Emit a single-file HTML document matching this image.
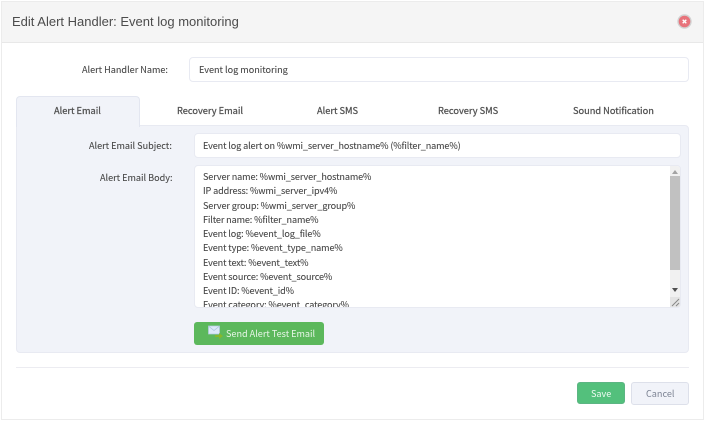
<!DOCTYPE html>
<html><head><meta charset="utf-8">
<style>
html,body{margin:0;padding:0;width:705px;height:422px;overflow:hidden;background:#fff}
body{font-family:"Noto Sans CJK JP","Liberation Sans",sans-serif;color:#454545;font-size:9.1px;-webkit-text-stroke:.08px #454545}
#p{position:relative;width:705px;height:422px;background:#fff;overflow:hidden;filter:blur(.25px)}
.a{position:absolute;box-sizing:border-box}
.t{position:absolute;white-space:nowrap;line-height:14px}
.b{color:#505050;font-size:9.25px;-webkit-text-stroke:.25px #505050}
.n{letter-spacing:-.12px}
.i{position:absolute;box-sizing:border-box;background:#fff;border:1px solid #e8eaf2;border-radius:4px}
</style></head><body><div id="p">
<div class="a" style="left:1px;top:1px;width:703px;height:419px;border:1px solid #ececec;background:#fff"></div>
<div class="a" style="left:2px;top:2px;width:701px;height:41px;background:#f5f5f5;border-bottom:1px solid #e8e8e8"></div>
<div class="t" style="left:12px;top:13px;font-family:'Liberation Sans',sans-serif;font-size:13px;line-height:18px;color:#4c4c4c;-webkit-text-stroke:0">Edit Alert Handler: Event log monitoring</div>
<svg class="a" style="left:677px;top:14px" width="15" height="15" viewBox="0 0 15 15"><circle cx="7.5" cy="7.5" r="6.5" fill="#e8737b" stroke="#d2d2d2" stroke-width="1.4"/><path d="M5.7 5.7l3.6 3.6M9.3 5.7l-3.6 3.6" stroke="#fff" stroke-width="1.4"/></svg>

<div class="t" style="left:82px;top:62px">Alert Handler Name:</div>
<div class="i" style="left:189px;top:57px;width:500px;height:25px"></div>
<div class="t" style="left:199px;top:62px">Event log monitoring</div>

<div class="a" style="left:16px;top:125px;width:673px;height:228px;background:#f1f3f9;border:1px solid #e8eaf2;border-radius:0 4px 4px 4px"></div>
<div class="a" style="left:16px;top:96px;width:124px;height:31px;background:#f1f3f9;border:1px solid #e3e6f0;border-bottom:0;border-radius:4px 4px 0 0"></div>
<div class="t b" style="left:54px;top:103px">Alert Email</div>
<div class="t b" style="left:177px;top:103px">Recovery Email</div>
<div class="t b" style="left:317px;top:103px">Alert SMS</div>
<div class="t b" style="left:438px;top:103px">Recovery SMS</div>
<div class="t b" style="left:573px;top:103px">Sound Notification</div>

<div class="t" style="left:89px;top:138px">Alert Email Subject:</div>
<div class="i" style="left:194px;top:133px;width:487px;height:25px"></div>
<div class="t n" style="left:203px;top:138px">Event log alert on %wmi_server_hostname% (%filter_name%)</div>

<div class="t" style="left:100px;top:170px">Alert Email Body:</div>
<div class="i" style="left:194px;top:165px;width:487px;height:143px;overflow:hidden">
<div class="n" style="position:absolute;left:8px;top:3px;line-height:14.25px;white-space:pre">Server name: %wmi_server_hostname%
IP address: %wmi_server_ipv4%
Server group: %wmi_server_group%
Filter name: %filter_name%
Event log: %event_log_file%
Event type: %event_type_name%
Event text: %event_text%
Event source: %event_source%
Event ID: %event_id%
Event category: %event_category%</div>
<div style="position:absolute;right:0;top:0;width:10px;height:141px;background:#f1f1f1"></div>
<div style="position:absolute;right:0;top:10px;width:10px;height:94px;background:#c1c1c1"></div>
<div style="position:absolute;right:2px;top:4px;width:0;height:0;border:3px solid transparent;border-top:0;border-bottom:4px solid #a3a3a3"></div>
<div style="position:absolute;right:2px;top:122px;width:0;height:0;border:3px solid transparent;border-bottom:0;border-top:4px solid #505050"></div>
<div style="position:absolute;right:0;bottom:0;width:10px;height:10px;background:#e4e4e4"></div>
<svg style="position:absolute;right:0;bottom:0" width="10" height="10"><path d="M2 9L9 2M6 9L9 6" stroke="#888" stroke-width="1"/></svg>
</div>

<div class="a" style="left:194px;top:322px;width:130px;height:23px;background:#5cb85c;border-radius:3px"></div>
<svg class="a" style="left:208px;top:325px" width="16" height="14" viewBox="0 0 16 14"><rect x="0.5" y="1" width="11" height="8" fill="#dce9f8" stroke="#b5cbe4" stroke-width=".7"/><path d="M1 1.5l5 4 5-4" fill="none" stroke="#a9c2de" stroke-width=".7"/><path d="M7 10h4V8l4 3-4 3v-2H7z" fill="#86b82c"/></svg>
<div class="t" style="left:226px;top:326px;color:#e9f6e9;-webkit-text-stroke:0">Send Alert Test Email</div>

<div class="a" style="left:16px;top:367px;width:673px;height:1px;background:#ececf1"></div>
<div class="a" style="left:577px;top:382px;width:48px;height:22px;background:#53c07c;border-radius:3px;border:1px solid #5cb583"></div>
<div class="t" style="left:591px;top:386px;color:#eefaf2;-webkit-text-stroke:0">Save</div>
<div class="a" style="left:631px;top:382px;width:58px;height:23px;background:#f1f3f9;border:1px solid #dde0ea;border-radius:3px"></div>
<div class="t" style="left:646px;top:386px;color:#7d8494;-webkit-text-stroke:0">Cancel</div>
</div></body></html>
